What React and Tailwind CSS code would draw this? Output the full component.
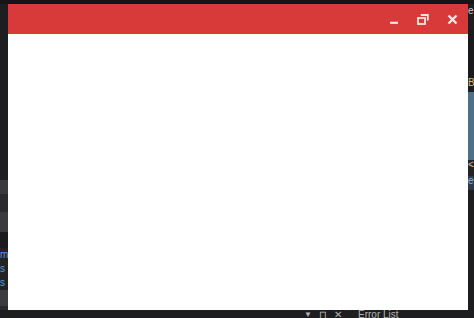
const MinimizeIcon = () => (
    <svg width="10" height="10" viewBox="0 0 10 10" fill="none">
        <path d="M1 8.8h8" stroke="currentColor" strokeWidth="2.2" />
    </svg>
);

const RestoreIcon = () => (
    <svg width="12" height="11" viewBox="0 0 12 11" fill="none">
        <path d="M3.8 1h7v5.6" stroke="currentColor" strokeWidth="1.8" />
        <rect x="1" y="4" width="7" height="6" stroke="currentColor" strokeWidth="1.8" />
    </svg>
);

const CloseIcon = () => (
    <svg width="11" height="11" viewBox="0 0 11 11" fill="none">
        <path d="M1.5 1.5l8 8M9.5 1.5l-8 8" stroke="currentColor" strokeWidth="2.4" />
    </svg>
);

const App = () => {
    return (
        <div className="w-[474px] h-[318px] overflow-hidden bg-[#1c1c1e] flex flex-col font-['Liberation_Sans',sans-serif]">
            <div className="h-[4px] bg-[#151517]" />
            <div className="flex h-[306px]">
                {/* editor peeking out on the left */}
                <div className="w-[8px] flex flex-col">
                    <div className="h-[176px] bg-[#1e1e20]" />
                    <div className="h-[14px] bg-[#3a3a3d]" />
                    <div className="h-[18px] bg-[#2b2b2e]" />
                    <div className="h-[20px] bg-[#3b3b3e]" />
                    <div className="h-[16px] bg-[#1b1b1d]" />
                    <div className="h-[42px] bg-[#232326] flex flex-col text-[10px] leading-[14px] text-[#5b9bd5] overflow-hidden">
                        <span>m</span>
                        <span>s</span>
                        <span>s</span>
                    </div>
                    <div className="h-[16px] bg-[#3c3c3f]" />
                    <div className="flex-1 bg-[#2a2a2c]" />
                </div>

                {/* the window */}
                <div className="w-[460px] flex flex-col bg-white">
                    <div className="h-[30px] bg-[#d83a3a] flex items-center justify-end gap-[18px] pr-[10px] text-[#fbe3df]">
                        <MinimizeIcon />
                        <RestoreIcon />
                        <CloseIcon />
                    </div>
                    <div className="flex-1 bg-white" />
                </div>

                {/* editor peeking out on the right */}
                <div className="w-[6px] flex flex-col text-[10px] leading-none text-[#c8c8c8] overflow-hidden">
                    <div className="h-[26px] bg-[#1e1e20] pt-[2px]">e</div>
                    <div className="h-[48px] bg-[#1a1a1c]" />
                    <div className="h-[14px] bg-[#1e1e20] text-[#d7ba7d]">B</div>
                    <div className="h-[68px] bg-[#4f7086]" />
                    <div className="h-[16px] bg-[#232326]">&lt;</div>
                    <div className="h-[14px] bg-[#2d3a4a] text-[#8fb4e0]">e</div>
                    <div className="flex-1 bg-[#1d1d1f]" />
                </div>
            </div>
            <div className="flex-1 bg-[#1e1e20] flex items-start pl-[304px] text-[10px] leading-none text-[#b4b4b4] overflow-hidden">
                <span className="w-[15px] text-[8px] pt-[1px]">▼</span>
                <span className="w-[15px]">⊓</span>
                <span className="w-[24px]">✕</span>
                <span>Error List</span>
            </div>
        </div>
    );
};

export default App;
